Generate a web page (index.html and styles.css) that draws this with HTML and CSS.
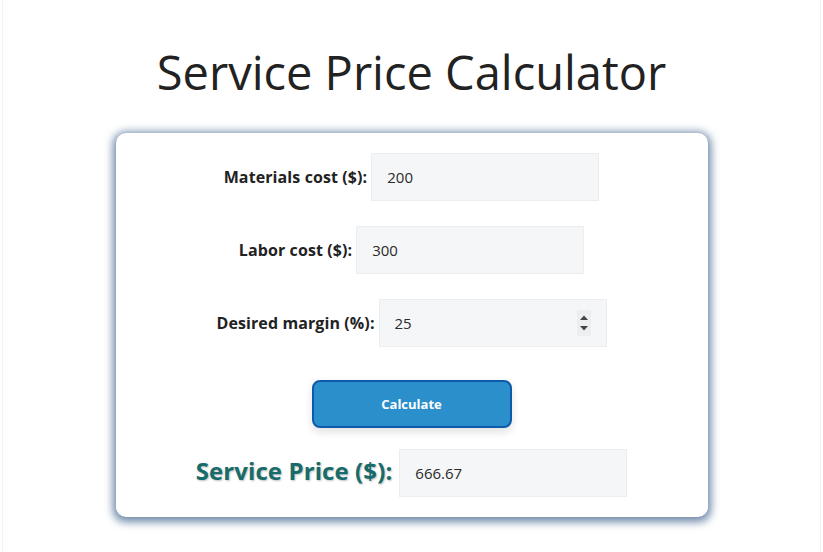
FILE: index.html
```html
<!DOCTYPE html>
<html lang="en">
<head>
  <meta charset="UTF-8">
  <meta name="viewport" content="width=device-width, initial-scale=1.0">
  <title>Service Price Calculator</title>
  <link rel="stylesheet" href="styles.css">
</head>
<body>
  <div class="page">
    <h1>Service Price Calculator</h1>

    <div class="calculator">
      <div class="row">
        <label for="materials">Materials cost ($):</label>
        <input type="text" id="materials" value="200">
      </div>

      <div class="row">
        <label for="labor">Labor cost ($):</label>
        <input type="text" id="labor" value="300">
      </div>

      <div class="row">
        <label for="margin">Desired margin (%):</label>
        <div class="field">
          <input type="text" id="margin" value="25">
          <svg class="spinner" width="14" height="26" viewBox="0 0 14 26">
            <rect x="0" y="0" width="14" height="26" fill="#eceef0"/>
            <path d="M3 10 L7 5.5 L11 10 Z" fill="#444"/>
            <path d="M3 16 L7 20.5 L11 16 Z" fill="#444"/>
          </svg>
        </div>
      </div>

      <button type="button" class="calc-btn">Calculate</button>

      <div class="row result">
        <label for="price">Service Price ($):</label>
        <input type="text" id="price" value="666.67" readonly>
      </div>
    </div>
  </div>
</body>
</html>
```

FILE: styles.css
```css
/* General Styles */
* {
  box-sizing: border-box;
  margin: 0;
  padding: 0;
}

body {
  font-family: "Open Sans", "Noto Sans", sans-serif;
  background-color: #fff;
  color: #222;
}

.page {
  margin: 0 2px;
  min-height: 552px;
  border-left: 1px solid #f2f2f2;
  border-right: 1px solid #f2f2f2;
  padding-top: 40px;
  display: flex;
  flex-direction: column;
  align-items: center;
}

h1 {
  font-size: 47px;
  font-weight: 400;
  color: #222;
  line-height: 64px;
  margin-bottom: 29px;
}

/* Calculator card */
.calculator {
  width: 592px;
  background: #fff;
  border-radius: 10px;
  box-shadow: 0 2px 8px 3px rgba(74, 108, 148, 0.8);
  padding: 20px 0;
  display: flex;
  flex-direction: column;
  align-items: center;
  gap: 25px;
}

.row {
  display: flex;
  align-items: center;
  gap: 4px;
}

.row label {
  font-weight: 700;
  font-size: 16px;
  letter-spacing: 0.1px;
}

.row input,
.field {
  width: 228px;
  height: 48px;
  background: #f5f6f8;
  border: 1px solid #ebedef;
  font-family: inherit;
  font-size: 15px;
  color: #2a2a2a;
  padding: 0 15px;
}

.field {
  display: flex;
  align-items: center;
  padding-right: 15px;
}

.row .field input {
  flex: 1;
  min-width: 0;
  width: auto;
  height: auto;
  border: none;
  padding: 0;
  background: transparent;
}

.spinner {
  display: block;
  flex: none;
}

/* Button */
.calc-btn {
  margin-top: 8px;
  width: 200px;
  height: 48px;
  background: #2b8fcb;
  border: 2px solid #0d5aaa;
  border-radius: 8px;
  color: #fff;
  font-family: inherit;
  font-weight: 700;
  font-size: 13px;
  box-shadow: 0 4px 8px rgba(0, 0, 0, 0.12);
}

/* Result line */
.result {
  margin-top: -4px;
  gap: 7px;
}

.result label {
  font-size: 24px;
  color: #186b6b;
  text-shadow: 1px 1px 2px rgba(0, 0, 0, 0.25);
  padding-bottom: 5px;
}

.result input {
  font-size: 15px;
}
```
